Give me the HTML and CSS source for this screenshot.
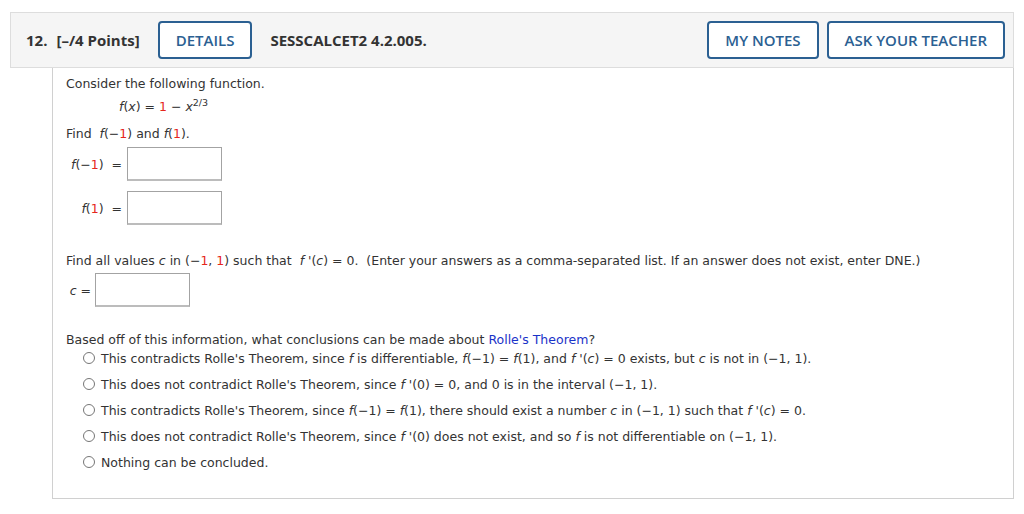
FILE: index.html
```html
<!DOCTYPE html>
<html>
<head>
<meta charset="utf-8">
<link rel="stylesheet" href="styles.css">
</head>
<body>
<div class="page">
  <div class="header">
    <div class="hleft">
      <span class="qnum">12.</span>
      <span class="pts">[–/4 Points]</span>
      <span class="btn">DETAILS</span>
      <span class="code">SESSCALCET2 4.2.005.</span>
    </div>
    <div class="hright">
      <span class="btn">MY NOTES</span>
      <span class="btn">ASK YOUR TEACHER</span>
    </div>
  </div>
  <div class="content">
    <p class="line first">Consider the following function.</p>
    <p class="line fx"><i>f</i>(<i>x</i>) = <span class="red">1</span> − <i>x</i><sup>2/3</sup></p>
    <p class="line find">Find&nbsp; <i>f</i>(−<span class="red">1</span>) and <i>f</i>(<span class="red">1</span>).</p>
    <div class="ans">
      <span class="lbl"><i>f</i>(−<span class="red">1</span>) &nbsp;=</span>
      <span class="box"></span>
    </div>
    <div class="ans">
      <span class="lbl"><i>f</i>(<span class="red">1</span>) &nbsp;=</span>
      <span class="box"></span>
    </div>
    <p class="line find2">Find all values <i>c</i> in (−<span class="red">1</span>, <span class="red">1</span>) such that&nbsp; <i>f</i> '(<i>c</i>) = 0.&nbsp; (Enter your answers as a comma-separated list. If an answer does not exist, enter DNE.)</p>
    <div class="ans cans">
      <span class="clbl"><i>c</i> =</span>
      <span class="box"></span>
    </div>
    <p class="line based">Based off of this information, what conclusions can be made about <span class="blue">Rolle's Theorem</span>?</p>
    <div class="opts">
      <div class="opt"><span class="radio"></span><span>This contradicts Rolle's Theorem, since <i>f</i> is differentiable, <i>f</i>(−1) = <i>f</i>(1), and <i>f</i> '(<i>c</i>) = 0 exists, but <i>c</i> is not in (−1, 1).</span></div>
      <div class="opt"><span class="radio"></span><span>This does not contradict Rolle's Theorem, since <i>f</i> '(0) = 0, and 0 is in the interval (−1, 1).</span></div>
      <div class="opt"><span class="radio"></span><span>This contradicts Rolle's Theorem, since <i>f</i>(−1) = <i>f</i>(1), there should exist a number <i>c</i> in (−1, 1) such that <i>f</i> '(<i>c</i>) = 0.</span></div>
      <div class="opt"><span class="radio"></span><span>This does not contradict Rolle's Theorem, since <i>f</i> '(0) does not exist, and so <i>f</i> is not differentiable on (−1, 1).</span></div>
      <div class="opt"><span class="radio"></span><span>Nothing can be concluded.</span></div>
    </div>
  </div>
</div>
</body>
</html>
```
FILE: styles.css
```css
html, body {
  margin: 0;
  padding: 0;
  background: #fff;
}
.page {
  padding: 12px 10px 0 10px;
}
.header {
  height: 54px;
  background: #f5f5f5;
  border: 1px solid #dddddd;
  display: flex;
  align-items: center;
  justify-content: space-between;
  padding: 0 8px 0 15px;
  font-family: "Open Sans", sans-serif;
  color: #333;
}
.hleft, .hright {
  display: flex;
  align-items: center;
}
.hright {
  gap: 8px;
}
.qnum {
  font-weight: 700;
  font-size: 15px;
  margin-right: 9px;
}
.pts {
  font-weight: 700;
  font-size: 15px;
  margin-right: 18px;
}
.code {
  font-weight: 700;
  font-size: 15px;
  margin-left: 18px;
}
.btn {
  display: inline-flex;
  align-items: center;
  justify-content: center;
  height: 34px;
  padding: 0 16px;
  border: 2px solid #2b6092;
  border-radius: 4px;
  background: #fff;
  color: #2b6092;
  font-weight: 600;
  font-size: 15px;
}
.content {
  margin-left: 42px;
  border: 1px solid #d0d0d0;
  border-top: none;
  height: 431px;
  box-sizing: border-box;
  padding: 8px 0 0 13px;
  font-family: "DejaVu Sans", Verdana, sans-serif;
  font-size: 12.5px;
  color: #333;
}
.line {
  margin: 0;
  line-height: 16px;
}
.red { color: #e5261c; }
.blue { color: #1a33c8; }
sup {
  font-size: 9.5px;
  vertical-align: 5px;
  line-height: 0;
}
.fx {
  margin-top: 7px;
  padding-left: 53px;
}
.find {
  margin-top: 11px;
}
.ans {
  display: flex;
  align-items: center;
  margin-top: 5px;
}
.ans + .ans {
  margin-top: 10px;
}
.lbl {
  width: 61px;
  text-align: right;
  padding-right: 5px;
  box-sizing: border-box;
}
.box {
  display: inline-block;
  width: 95px;
  height: 34px;
  box-sizing: border-box;
  border: 1px solid #a3a3a3;
  border-bottom: 2px solid #bcbcbc;
  background: #fff;
}
.find2 {
  margin-top: 28px;
}
.cans {
  margin-top: 4px;
}
.clbl {
  width: 29px;
  text-align: right;
  padding-right: 4px;
  box-sizing: border-box;
}
.based {
  margin-top: 25px;
}
.opts {
  padding-left: 17px;
}
.opt {
  display: flex;
  align-items: center;
  height: 16px;
  margin-top: 2px;
}
.opt + .opt {
  margin-top: 10px;
}
.radio {
  width: 12px;
  height: 12px;
  border: 1px solid #767676;
  border-radius: 50%;
  box-sizing: border-box;
  margin-right: 6px;
  flex: none;
  background: #fff;
}
```
